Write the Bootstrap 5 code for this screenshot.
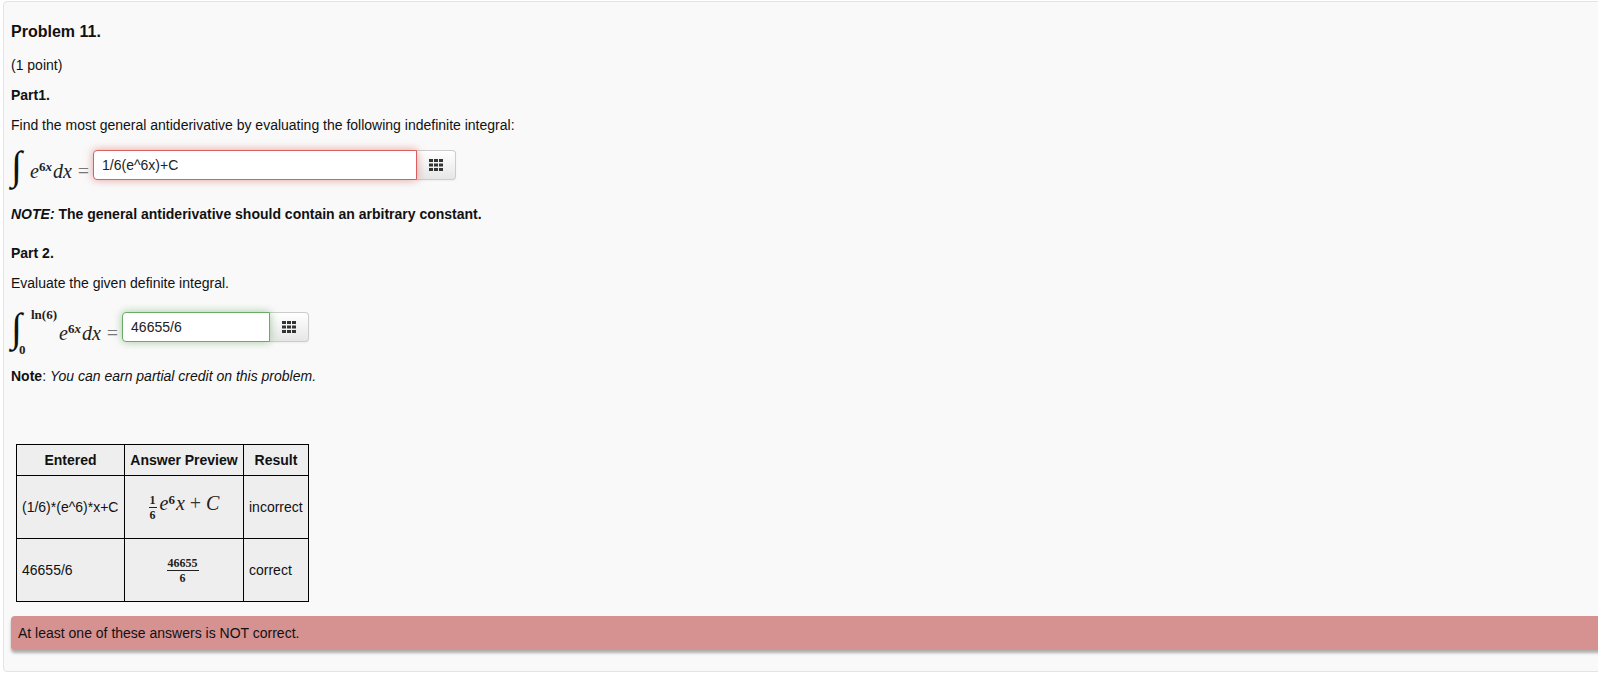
<!doctype html>
<html lang="en">
<head>
<meta charset="utf-8">
<title>Problem 11</title>
<link href="https://cdn.jsdelivr.net/npm/bootstrap@5.3.0/dist/css/bootstrap.min.css" rel="stylesheet">
<style>
html,body{overflow:hidden;height:678px;background:#fff}
body{font-family:"Liberation Sans",Arial,sans-serif;font-size:14px;line-height:20px;color:#111;margin:0}
.well-box{margin:1px 0 0 3px;width:1800px;height:671px;background:#f9f9f9;border:1px solid #e3e3e3;border-radius:4px;padding:20px 0 0 7px}
.ttl{font-size:16px;font-weight:700;line-height:20px;margin:0 0 13px;color:#111}
.para{margin:0 0 10px}
.math-row{display:flex;align-items:center;height:30px}
.mth{font-family:"Liberation Serif","DejaVu Serif",serif;color:#222;white-space:nowrap;display:flex;align-items:baseline;padding-top:3px;height:30px}
.mth i{font-size:20px;line-height:23px}
.mth sup{font-family:"Liberation Serif",serif;font-size:13px;font-weight:700;top:-.55em;line-height:0;margin-right:1px}
.mth sup i{font-size:13px}
.intg{font-family:"Liberation Serif",serif;font-size:40px;line-height:23px;color:#111;width:19px;display:inline-block;transform:translateY(1px)}
.eqs{font-size:20px;color:#777;margin:0 4px 0 6px}
.after-lim{margin-left:29px}
.ans.input-group{flex-wrap:nowrap;width:auto}
.ans .form-control{flex:none;height:30px;padding:4px 8px;font-size:14px;line-height:20px;color:#222;border-radius:4px 0 0 4px;background:#fff;position:relative;z-index:3}
.bad .form-control{width:324px;border:1px solid #d9605f;box-shadow:0 0 8px rgba(217,96,95,.6)}
.good .form-control{width:148px;border:1px solid #6aab67;box-shadow:0 0 8px rgba(106,171,103,.6)}
.ans .gridbtn{width:40px;height:30px;padding:0;margin-left:0;display:flex;align-items:center;justify-content:center;background:linear-gradient(#fff,#e6e6e6);border:1px solid #ccc;border-left:0;border-radius:0 4px 4px 0;box-shadow:0 1px 2px rgba(0,0,0,.05)}
.gridbtn svg{display:block}
.limits{display:flex;height:0;align-self:center}
.lim-hi,.lim-lo{font-family:"Liberation Serif",serif;font-weight:700;font-size:13px;line-height:14px;color:#222;display:block}
.lim-hi{transform:translateY(-21px);margin-left:1px}
.lim-lo{transform:translateY(14px);margin-left:-38px;width:9px}
.res{border-collapse:collapse;margin:0 0 14px 5px;width:292px;table-layout:fixed}
.res th,.res td{border:1px solid #000;background:#eee;padding:0 5px;color:#111;vertical-align:middle}
.res th{text-align:center;font-weight:700;height:31px;white-space:nowrap;padding:0 3px}
.res td{height:63px;white-space:nowrap}
.res td.mid{text-align:center;padding:0;font-family:"Liberation Serif",serif;color:#222}
.frc{display:inline-flex;flex-direction:column;align-items:center;vertical-align:middle;font-weight:700;font-size:12px;line-height:14px;margin-right:3px}
.frc>span:first-child{border-bottom:1px solid #222;padding:0 1px}
.pv{font-size:20px;font-style:italic}
.pv sup{font-size:13px;font-style:normal;font-weight:700;top:-.5em;line-height:0;margin-right:1px}
.pv .op{font-style:normal;color:#333}
.msg{width:1780px;height:34px;line-height:34px;padding:0 7px;background:#d69191;color:#111;border-radius:4px;box-shadow:0 3px 3px rgba(0,0,0,.3)}
</style>
</head>
<body>
<div class="well-box">
  <h1 class="ttl">Problem 11.</h1>
  <p class="para">(1 point)</p>
  <p class="para fw-bold">Part1.</p>
  <p class="para" style="margin-bottom:15px">Find the most general antiderivative by evaluating the following indefinite integral:</p>
  <div class="math-row">
    <span class="mth"><span class="intg">∫</span><i>e</i><sup>6<i>x</i></sup><i>dx</i><span class="eqs">=</span></span>
    <div class="input-group ans bad">
      <input class="form-control" type="text" value="1/6(e^6x)+C" aria-label="Answer 1">
      <button class="btn gridbtn" type="button" aria-label="Equation editor"><svg width="14" height="12" viewBox="0 0 14 12"><path fill="#333" d="M0 0h4v3H0zM5 0h4v3H5zM10 0h4v3h-4zM0 4.500h4v3H0zM5 4.500h4v3H5zM10 4.500h4v3h-4zM0 9h4v3H0zM5 9h4v3H5zM10 9h4v3h-4z"/></svg></button>
    </div>
  </div>
  <p class="para fw-bold" style="margin:24px 0 19px"><i>NOTE:</i> The general antiderivative should contain an arbitrary constant.</p>
  <p class="para fw-bold">Part 2.</p>
  <p class="para" style="margin-bottom:19px">Evaluate the given definite integral.</p>
  <div class="math-row">
    <span class="mth"><span class="intg">∫</span><span class="limits"><span class="lim-hi">ln(6)</span><span class="lim-lo">0</span></span><i class="after-lim">e</i><sup>6<i>x</i></sup><i>dx</i><span class="eqs">=</span></span>
    <div class="input-group ans good">
      <input class="form-control" type="text" value="46655/6" aria-label="Answer 2">
      <button class="btn gridbtn" type="button" aria-label="Equation editor"><svg width="14" height="12" viewBox="0 0 14 12"><path fill="#333" d="M0 0h4v3H0zM5 0h4v3H5zM10 0h4v3h-4zM0 4.500h4v3H0zM5 4.500h4v3H5zM10 4.500h4v3h-4zM0 9h4v3H0zM5 9h4v3H5zM10 9h4v3h-4z"/></svg></button>
    </div>
  </div>
  <p class="para" style="margin:24px 0 58px"><b>Note</b>: <i>You can earn partial credit on this problem.</i></p>
  <table class="res">
    <colgroup><col style="width:108px"><col style="width:119px"><col style="width:65px"></colgroup>
    <thead><tr><th>Entered</th><th>Answer Preview</th><th>Result</th></tr></thead>
    <tbody>
      <tr><td>(1/6)*(e^6)*x+C</td><td class="mid"><span class="frc"><span>1</span><span>6</span></span><span class="pv">e<sup>6</sup>x <span class="op">+</span> C</span></td><td>incorrect</td></tr>
      <tr><td>46655/6</td><td class="mid"><span class="frc"><span>46655</span><span>6</span></span></td><td>correct</td></tr>
    </tbody>
  </table>
  <div class="msg">At least one of these answers is NOT correct.</div>
</div>
<script src="https://cdn.jsdelivr.net/npm/bootstrap@5.3.0/dist/js/bootstrap.bundle.min.js"></script>
</body>
</html>
